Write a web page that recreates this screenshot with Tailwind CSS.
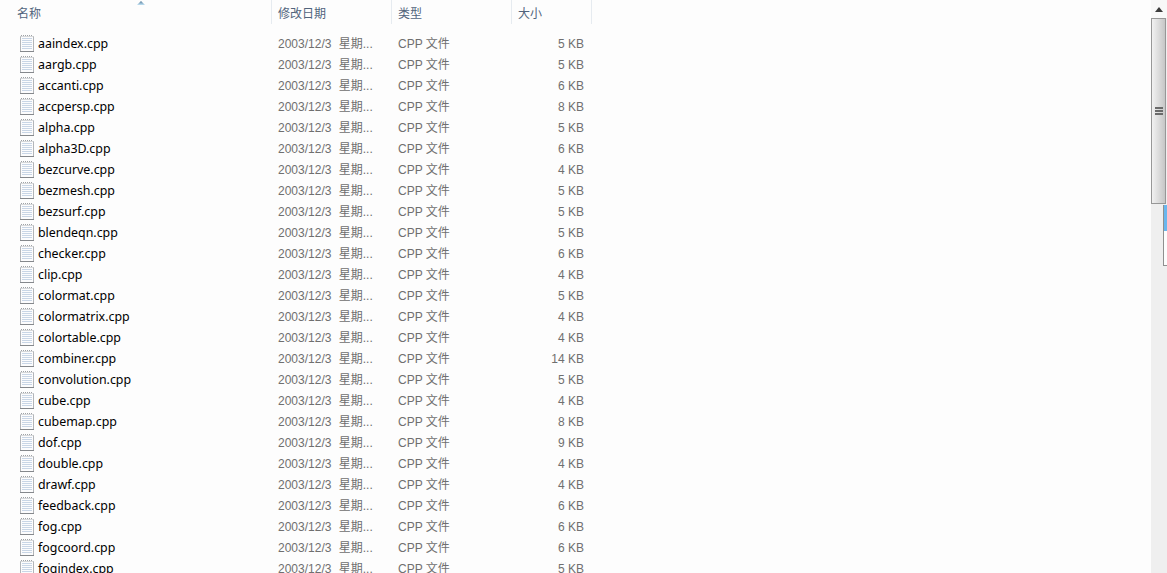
<!DOCTYPE html>
<html lang="zh">
<head>
  <meta charset="UTF-8">
  <title>Files</title>
  <script src="https://cdn.jsdelivr.net/npm/@tailwindcss/browser@4"></script>
</head>
<body class="bg-[#fdfdfd] overflow-hidden">
  <svg class="hidden">
    <symbol id="file" viewBox="0 0 14 17">
      <path d="M0.5 1.5H13.5V16.5H0.5Z" fill="#fcfcfd" stroke="#b2b5b9"/>
      <path d="M0 16.5H14" stroke="#85888c"/>
      <path d="M1 0.5H2M3 0.5H4M5 0.5H6M7 0.5H8M9 0.5H10M11 0.5H12" stroke="#a0a3a7"/>
      <path d="M1 1.5H13" stroke="#d6d8da"/>
      <path d="M2 3.5H12M2 5.5H12M2 7.5H12M2 9.5H12M2 11.5H12M2 13.5H12" stroke="#c9d6e6"/>
    </symbol>
  </svg>

  <div class="flex h-[573px] w-[1167px] overflow-hidden font-['Liberation_Sans','Noto_Sans_CJK_SC',sans-serif] text-[12px]">
    <div class="w-[1151px]">
      <!-- column headers -->
      <div class="relative flex h-[24px] text-[#51647c]">
        <div class="w-[272px] border-r border-[#e6ebf0] pl-[17px] pt-[5px]">名称</div>
        <div class="w-[120px] border-r border-[#e6ebf0] pl-[6px] pt-[5px]">修改日期</div>
        <div class="w-[120px] border-r border-[#e6ebf0] pl-[6px] pt-[5px]">类型</div>
        <div class="w-[80px] border-r border-[#e6ebf0] pl-[6px] pt-[5px]">大小</div>
        <svg class="absolute left-[137px] top-[1px]" width="8" height="4" viewBox="0 0 8 4"><defs><linearGradient id="sort" x1="0" y1="0" x2="0" y2="1"><stop offset="0" stop-color="#4f7795"/><stop offset="1" stop-color="#c3e4f7"/></linearGradient></defs><path d="M4 0L8 4H0Z" fill="url(#sort)"/></svg>
      </div>

      <!-- rows, filled in below -->
      <div id="rows" class="pt-[9px]"></div>
    </div>

    <!-- scrollbar -->
    <div class="relative flex w-[16px] flex-col bg-[#efefef]">
      <div class="flex h-[18px] items-center justify-center bg-[#f8f8f8]">
        <svg width="8" height="5" viewBox="0 0 8 5"><path d="M4 0L8 5H0Z" fill="#3c3c3c"/></svg>
      </div>
      <div class="flex h-[186px] w-[15px] items-center justify-center border border-[#979797] bg-gradient-to-r from-[#f1f1f1] via-[#dcdcdc] to-[#c6c6c6]">
        <div class="flex w-[8px] flex-col gap-[1px]">
          <div class="h-[2px] bg-[#6a6a6a]"></div>
          <div class="h-[2px] bg-[#6a6a6a]"></div>
          <div class="h-[2px] bg-[#6a6a6a]"></div>
        </div>
      </div>
      <!-- window peeking out behind the scrollbar -->
      <div class="absolute left-[12px] top-[205px] h-[61px] w-[4px] border-b border-l border-[#8f8f8f] bg-[#fdfdfd]">
        <div class="h-[26px] bg-[#6ab7ee]"></div>
      </div>
    </div>
  </div>

  <script>
    // name, size in KB
    const files = [
      ['aaindex.cpp', 5], ['aargb.cpp', 5], ['accanti.cpp', 6], ['accpersp.cpp', 8], ['alpha.cpp', 5],
      ['alpha3D.cpp', 6], ['bezcurve.cpp', 4], ['bezmesh.cpp', 5], ['bezsurf.cpp', 5], ['blendeqn.cpp', 5],
      ['checker.cpp', 6], ['clip.cpp', 4], ['colormat.cpp', 5], ['colormatrix.cpp', 4], ['colortable.cpp', 4],
      ['combiner.cpp', 14], ['convolution.cpp', 5], ['cube.cpp', 4], ['cubemap.cpp', 8], ['dof.cpp', 9],
      ['double.cpp', 4], ['drawf.cpp', 4], ['feedback.cpp', 6], ['fog.cpp', 6], ['fogcoord.cpp', 6],
      ['fogindex.cpp', 5]
    ];
    document.getElementById('rows').innerHTML = files.map(([name, size]) => `
      <div class="flex h-[21px] items-center">
        <svg class="ml-[20px] mr-[4px] h-[17px] w-[14px] shrink-0"><use href="#file"/></svg>
        <span class="w-[240px] pt-[2px] font-['Noto_Sans'] text-[12.4px] text-black">${name}</span>
        <span class="w-[120px] text-[#6f6f6f] [word-spacing:4px]">2003/12/3 星期...</span>
        <span class="w-[100px] text-[#6f6f6f]">CPP 文件</span>
        <span class="w-[86px] text-right text-[#6f6f6f]">${size} KB</span>
      </div>`).join('');
  </script>
</body>
</html>
